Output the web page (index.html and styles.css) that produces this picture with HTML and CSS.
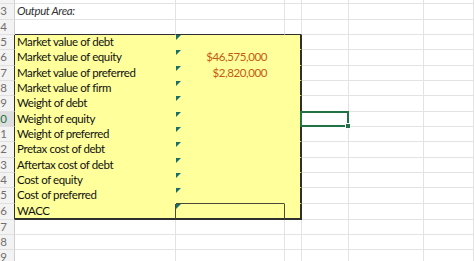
FILE: index.html
```html
<!DOCTYPE html>
<html lang="en">
<head>
    <meta charset="UTF-8">
    <meta name="viewport" content="width=device-width, initial-scale=1.0">
    <title>WACC worksheet</title>
    <link rel="stylesheet" href="styles.css">
</head>
<body>
    <table class="sheet">
        <colgroup>
            <col class="c-head">
            <col class="c-a">
            <col class="c-b">
            <col class="c-c">
            <col class="c-d">
            <col class="c-e">
            <col class="c-f">
            <col class="c-g">
        </colgroup>
        <tr><th>2</th><td></td><td></td><td></td><td></td><td></td><td></td><td></td></tr>
        <tr><th>3</th><td class="title">Output Area:</td><td></td><td></td><td></td><td></td><td></td><td></td></tr>
        <tr><th>4</th><td class="top"></td><td class="top"></td><td class="top"></td><td></td><td></td><td></td><td></td></tr>
        <tr><th class="edge">5</th><td class="y">Market value of debt</td><td class="y flag"></td><td class="y r"></td><td></td><td></td><td></td><td></td></tr>
        <tr><th class="edge">6</th><td class="y">Market value of equity</td><td class="y flag num">$46,575,000</td><td class="y r"></td><td></td><td></td><td></td><td></td></tr>
        <tr><th class="edge">7</th><td class="y">Market value of preferred</td><td class="y flag num">$2,820,000</td><td class="y r"></td><td></td><td></td><td></td><td></td></tr>
        <tr><th class="edge">8</th><td class="y">Market value of firm</td><td class="y flag"></td><td class="y r"></td><td></td><td></td><td></td><td></td></tr>
        <tr><th class="edge">9</th><td class="y">Weight of debt</td><td class="y flag"></td><td class="y r"></td><td></td><td></td><td></td><td></td></tr>
        <tr><th class="edge active">10</th><td class="y">Weight of equity</td><td class="y flag"></td><td class="y r"></td><td class="sel"></td><td></td><td></td><td></td></tr>
        <tr><th class="edge">11</th><td class="y">Weight of preferred</td><td class="y flag"></td><td class="y r"></td><td></td><td></td><td></td><td></td></tr>
        <tr><th class="edge">12</th><td class="y">Pretax cost of debt</td><td class="y flag"></td><td class="y r"></td><td></td><td></td><td></td><td></td></tr>
        <tr><th class="edge">13</th><td class="y">Aftertax cost of debt</td><td class="y flag"></td><td class="y r"></td><td></td><td></td><td></td><td></td></tr>
        <tr><th class="edge">14</th><td class="y">Cost of equity</td><td class="y flag"></td><td class="y r"></td><td></td><td></td><td></td><td></td></tr>
        <tr><th class="edge">15</th><td class="y">Cost of preferred</td><td class="y flag over"></td><td class="y r"></td><td></td><td></td><td></td><td></td></tr>
        <tr><th class="edge">16</th><td class="y bottom beside">WACC</td><td class="y flag bottom wacc"></td><td class="y r bottom"></td><td></td><td></td><td></td><td></td></tr>
        <tr><th>17</th><td></td><td></td><td></td><td></td><td></td><td></td><td></td></tr>
        <tr><th>18</th><td></td><td></td><td></td><td></td><td></td><td></td><td></td></tr>
        <tr><th>19</th><td></td><td></td><td></td><td></td><td></td><td></td><td></td></tr>
        <tr><th>20</th><td></td><td></td><td></td><td></td><td></td><td></td><td></td></tr>
    </table>
</body>
</html>
```

FILE: styles.css
```css
html, body {
    margin: 0;
    padding: 0;
    background: #fff;
    overflow: hidden;
}
.sheet {
    font-family: 'Lato', 'Liberation Sans', sans-serif;
    font-size: 11.5px;
    letter-spacing: -0.4px;
    color: #111;
    table-layout: fixed;
    border-collapse: separate;
    border-spacing: 0;
    width: 560px;
    margin: -11px 0 0 -14px;
}
.c-head { width: 29px; }
.c-a { width: 161px; }
.c-b { width: 109px; }
.c-c { width: 17px; }
.c-d { width: 47px; }
.c-e { width: 75px; }
.c-f { width: 50px; }
.c-g { width: 72px; }
tr {
    height: 15.33px;
}
th, td {
    box-sizing: border-box;
    padding: 0 2px;
    white-space: nowrap;
    overflow: hidden;
    border-right: 1px solid #e3e3e3;
    border-bottom: 1px solid #e3e3e3;
    line-height: 14px;
}
th {
    background: #f3f3f3;
    color: #6f6f6f;
    font-weight: normal;
    letter-spacing: 0;
    text-align: right;
    padding-right: 7px;
    border-right-color: #cfcfcf;
    border-bottom-color: #e0e0e0;
}
th.edge {
    border-right: 1px solid #2f2f2f;
}
th.active {
    background: #dedede;
    color: #217346;
}
.title {
    font-style: italic;
    color: #333;
}

/* output block */
.y {
    background: #ffff9c;
    border-right-color: #ffff9c;
    border-bottom-color: #ffff9c;
}
.top {
    border-bottom: 1px solid #2f2f2f;
}
.y.r {
    border-right: 2px solid #2f2f2f;
}
.y.bottom {
    border-bottom: 2px solid #2f2f2f;
}
.y.over {
    border-bottom-color: #4a4a3a;
}
.y.beside {
    border-right-color: #4a4a3a;
}
.y.wacc {
    border-right-color: #4a4a3a;
}
.num {
    color: #c65911;
    text-align: right;
    padding-right: 17px;
}
.flag {
    position: relative;
}
.flag::before {
    content: '';
    position: absolute;
    top: 0;
    left: 0;
    border-top: 5px solid #14706c;
    border-right: 5px solid transparent;
}

/* active cell */
.sel {
    position: relative;
    overflow: visible;
}
.sel::after {
    content: '';
    position: absolute;
    top: -1px;
    left: -2px;
    right: -1px;
    bottom: -1px;
    border: 2px solid #217346;
}
.sel::before {
    content: '';
    position: absolute;
    right: -3px;
    bottom: -3px;
    width: 4px;
    height: 4px;
    background: #217346;
    border: 1px solid #fff;
    z-index: 1;
}
```
